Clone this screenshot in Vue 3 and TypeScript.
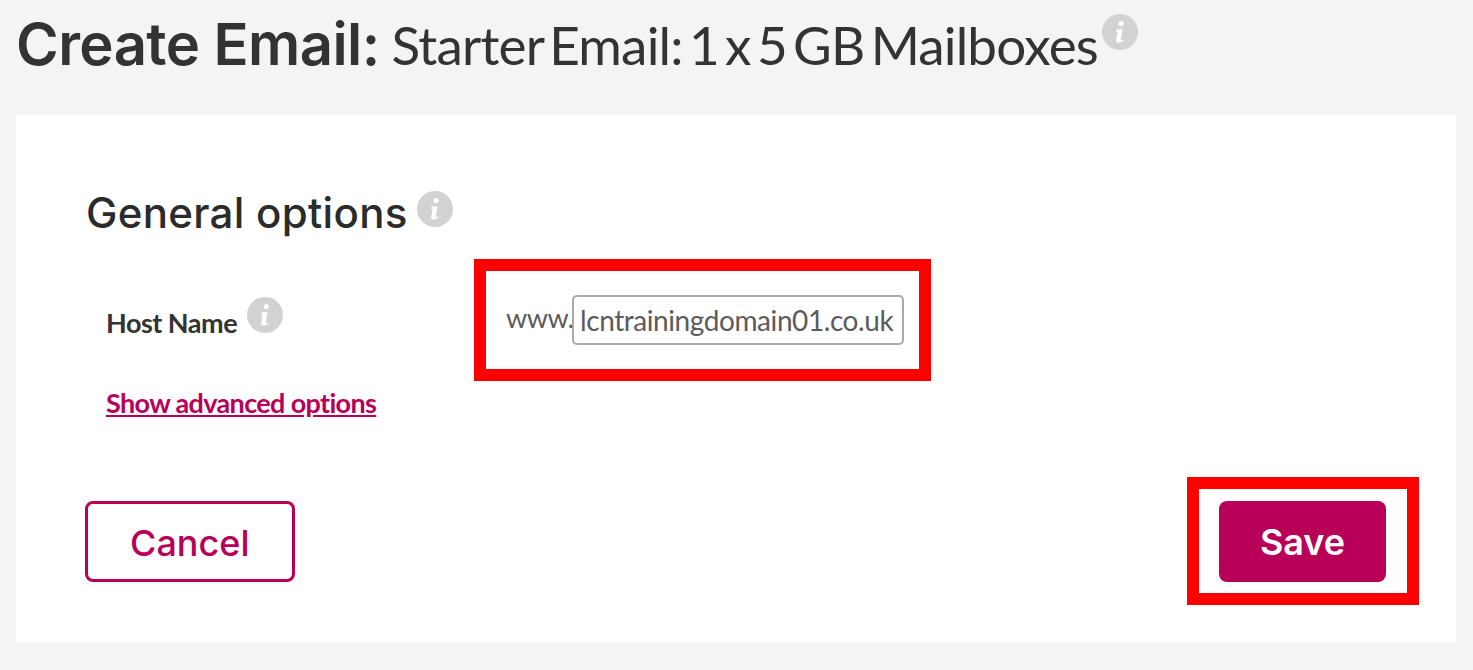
<script setup lang="ts">
const hostName: string = 'lcntrainingdomain01.co.uk'
</script>

<template>
  <main class="page">
    <h1 class="title">
      <span class="title-strong">Create Email:</span>
      <span class="title-light">Starter Email: 1 x 5 GB Mailboxes</span>
      <svg class="info info-title" viewBox="0 0 36 36" aria-hidden="true">
        <circle cx="18" cy="18" r="18" fill="#d2d2d2" />
        <circle cx="19.2" cy="9.6" r="2.6" fill="#fff" />
        <path d="M14.6 15.2h6l-1.9 10.2c-.1.8.6 1 2.6-.2l.3 1c-2.3 1.9-4.2 2.7-5.9 2.3-1.3-.3-1.8-1.3-1.5-2.7l1.4-7.8-1.5-.3z" fill="#fff" />
      </svg>
    </h1>

    <section class="card">
      <h2 class="section-title">
        General options
        <svg class="info info-section" viewBox="0 0 36 36" aria-hidden="true">
          <circle cx="18" cy="18" r="18" fill="#d2d2d2" />
          <circle cx="19.2" cy="9.6" r="2.6" fill="#fff" />
          <path d="M14.6 15.2h6l-1.9 10.2c-.1.8.6 1 2.6-.2l.3 1c-2.3 1.9-4.2 2.7-5.9 2.3-1.3-.3-1.8-1.3-1.5-2.7l1.4-7.8-1.5-.3z" fill="#fff" />
        </svg>
      </h2>

      <div class="host-row">
        <div class="host-label">
          <span>Host Name</span>
          <svg class="info info-host" viewBox="0 0 36 36" aria-hidden="true">
            <circle cx="18" cy="18" r="18" fill="#d2d2d2" />
            <circle cx="19.2" cy="9.6" r="2.6" fill="#fff" />
            <path d="M14.6 15.2h6l-1.9 10.2c-.1.8.6 1 2.6-.2l.3 1c-2.3 1.9-4.2 2.7-5.9 2.3-1.3-.3-1.8-1.3-1.5-2.7l1.4-7.8-1.5-.3z" fill="#fff" />
          </svg>
        </div>
        <div class="highlight host-highlight">
          <span class="prefix">www.</span>
          <input class="host-input" type="text" :value="hostName" />
        </div>
      </div>

      <a class="advanced" href="#">Show advanced options</a>

      <div class="actions">
        <button class="btn btn-cancel" type="button">Cancel</button>
        <div class="highlight save-highlight">
          <button class="btn btn-save" type="button">Save</button>
        </div>
      </div>
    </section>
  </main>
</template>

<style scoped>
.page {
  box-sizing: border-box;
  width: 1473px;
  height: 670px;
  padding: 0 17px 28px 16px;
  display: flex;
  flex-direction: column;
  background: #f4f4f4;
  overflow: hidden;
  color: #333;
}

.title {
  margin: 0;
  height: 115px;
  box-sizing: border-box;
  padding: 12px 0 0 0;
  display: flex;
  align-items: flex-start;
  font-weight: 400;
  white-space: nowrap;
}

.title-strong {
  font-family: Inter, "Noto Sans", sans-serif;
  font-weight: 600;
  font-size: 58px;
  line-height: 64px;
  letter-spacing: -0.57px;
  color: #333;
}

.title-light {
  margin-left: 12px;
  font-family: Lato, "Noto Sans", sans-serif;
  font-size: 53px;
  line-height: 66px;
  letter-spacing: -0.82px;
  word-spacing: -6.5px;
  color: #333;
}

.info {
  flex: none;
  display: block;
}

.info-title {
  width: 36px;
  height: 36px;
  margin: 2px 0 0 4px;
}

.card {
  flex: 1;
  box-sizing: border-box;
  padding: 0 37px 0 69px;
  background: #fff;
}

.section-title {
  margin: 0;
  padding: 71px 0 0 1px;
  display: flex;
  align-items: flex-start;
  height: 144px;
  box-sizing: border-box;
  font-family: Inter, "Noto Sans", sans-serif;
  font-weight: 500;
  font-size: 42px;
  line-height: 54px;
  letter-spacing: 0.3px;
  color: #2b2b2b;
  white-space: nowrap;
}

.info-section {
  width: 36px;
  height: 36px;
  margin: 5px 0 0 9px;
}

.host-row {
  height: 122px;
  display: flex;
  align-items: flex-start;
}

.host-label {
  width: 389px;
  box-sizing: border-box;
  padding: 38px 0 0 21px;
  display: flex;
  align-items: flex-start;
  font-family: Lato, "Noto Sans", sans-serif;
  font-weight: 700;
  font-size: 27px;
  line-height: 52px;
  letter-spacing: -0.5px;
  color: #333;
  white-space: nowrap;
}

.info-host {
  width: 36px;
  height: 36px;
  margin: 0 0 0 10px;
}

.highlight {
  box-sizing: border-box;
  border: 12px solid #ff0000;
  display: flex;
  align-items: center;
}

.host-highlight {
  width: 457px;
  height: 122px;
  padding: 0 15px 0 20px;
}

.prefix {
  flex: none;
  font-family: Lato, "Noto Sans", sans-serif;
  font-size: 27px;
  line-height: 50px;
  letter-spacing: -0.4px;
  color: #5b5b5b;
  width: 66px;
  margin-top: -4px;
}

.host-input {
  box-sizing: border-box;
  width: 332px;
  height: 50px;
  padding: 0 0 0 6px;
  border: 2px solid #a9a9a9;
  border-radius: 5px;
  outline: none;
  background: #fff;
  font-family: Lato, "Noto Sans", sans-serif;
  font-size: 28px;
  letter-spacing: -0.42px;
  color: #5b5b5b;
}

.advanced {
  display: block;
  margin: 0 0 0 21px;
  height: 120px;
  font-family: Lato, "Noto Sans", sans-serif;
  font-weight: 700;
  font-size: 27px;
  line-height: 44px;
  letter-spacing: -0.65px;
  color: #b90058;
  text-decoration: underline;
}

.actions {
  display: flex;
  justify-content: space-between;
  align-items: flex-start;
}

.btn {
  box-sizing: border-box;
  height: 81px;
  padding: 2px 0 0;
  border-radius: 8px;
  font-family: Inter, "Noto Sans", sans-serif;
  font-weight: 500;
  font-size: 36px;
  cursor: pointer;
}

.btn-cancel {
  width: 209.5px;
  border: 3px solid #b90058;
  background: #fff;
  color: #b90058;
}

.save-highlight {
  width: 232px;
  height: 128px;
  margin-top: -24px;
  padding-left: 20px;
}

.btn-save {
  width: 167px;
  border: 0;
  background: #b90058;
  color: #fff;
  font-weight: 600;
}
</style>

<style>
html,
body {
  margin: 0;
  background: #f4f4f4;
}
</style>
